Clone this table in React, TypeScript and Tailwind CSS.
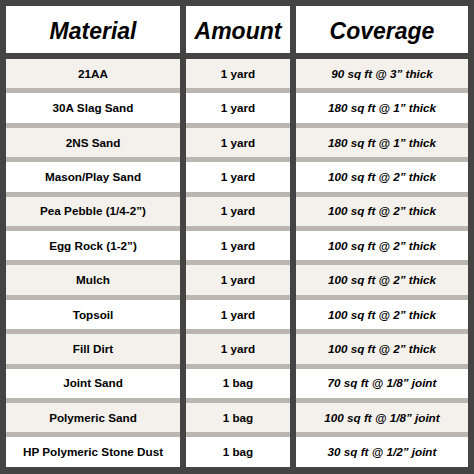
const rows: [string, string, string][] = [
  ['21AA', '1 yard', '90 sq ft @ 3” thick'],
  ['30A Slag Sand', '1 yard', '180 sq ft @ 1” thick'],
  ['2NS Sand', '1 yard', '180 sq ft @ 1” thick'],
  ['Mason/Play Sand', '1 yard', '100 sq ft @ 2” thick'],
  ['Pea Pebble (1/4-2”)', '1 yard', '100 sq ft @ 2” thick'],
  ['Egg Rock (1-2”)', '1 yard', '100 sq ft @ 2” thick'],
  ['Mulch', '1 yard', '100 sq ft @ 2” thick'],
  ['Topsoil', '1 yard', '100 sq ft @ 2” thick'],
  ['Fill Dirt', '1 yard', '100 sq ft @ 2” thick'],
  ['Joint Sand', '1 bag', '70 sq ft @ 1/8” joint'],
  ['Polymeric Sand', '1 bag', '100 sq ft @ 1/8” joint'],
  ['HP Polymeric Stone Dust', '1 bag', '30 sq ft @ 1/2” joint'],
]

const headers = ['Material', 'Amount', 'Coverage']

export default function App() {
  return (
    <div
      className="w-[474px] h-[474px] bg-[#444444] p-[6px] flex flex-col gap-[6px] text-black"
      style={{ fontFamily: '"Liberation Sans", Arial, sans-serif' }}
    >
      <div className="grid grid-cols-[174px_104px_172px] gap-x-[6px] h-[47px]">
        {headers.map((h) => (
          <div key={h} className="bg-white flex items-center justify-center pt-[3px]">
            <span className="text-[23px] font-bold italic leading-none">{h}</span>
          </div>
        ))}
      </div>
      <div className="grid grid-cols-[174px_104px_172px] grid-rows-[29.4px_repeat(11,34.4px)] gap-x-[6px]">
        {rows.map((r, i) => {
          const bg = i % 2 === 0 ? 'bg-[#f4f1ed]' : 'bg-white'
          const sep = i === 0 ? '' : 'border-t-[5px] border-[#bcb6b0]'
          return [
            <div key={`m${i}`} className={`${bg} ${sep} flex items-center justify-center text-[11.7px] font-bold`}>
              {r[0]}
            </div>,
            <div key={`a${i}`} className={`${bg} ${sep} flex items-center justify-center text-[11.7px] font-bold`}>
              {r[1]}
            </div>,
            <div key={`c${i}`} className={`${bg} ${sep} flex items-center justify-center text-[11.7px] font-bold italic`}>
              {r[2]}
            </div>,
          ]
        })}
      </div>
    </div>
  )
}
